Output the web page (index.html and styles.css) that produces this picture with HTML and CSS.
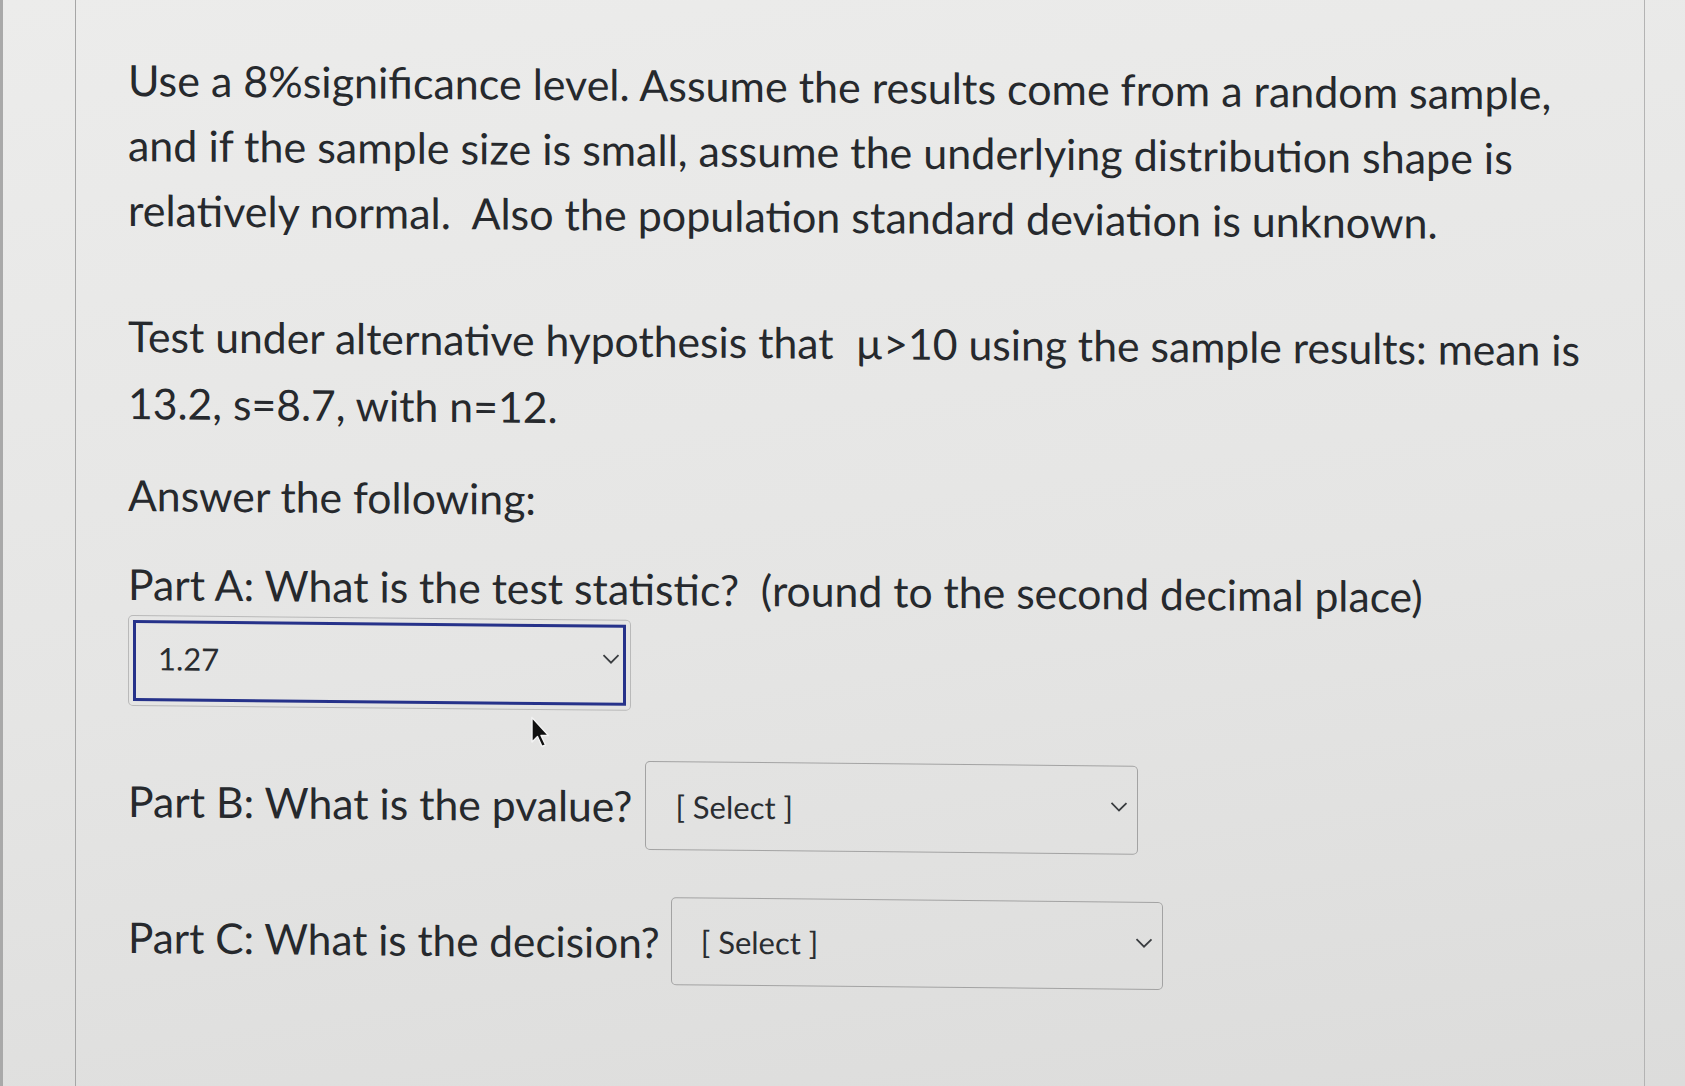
FILE: index.html
```html
<!DOCTYPE html>
<html lang="en">
<head>
    <meta charset="UTF-8">
    <meta name="viewport" content="width=device-width, initial-scale=1.0">
    <title>Quiz Question</title>
    <link rel="stylesheet" href="styles.css">
</head>
<body>
    <div class="page">
        <div class="question">
            <p class="intro">Use a 8%significance level. Assume the results come from a random sample,<br>
                and if the sample size is small, assume the underlying distribution shape is<br>
                relatively normal.&nbsp; Also the population standard deviation is unknown.</p>

            <p class="test">Test under alternative hypothesis that &nbsp;µ&gt;10 using the sample results: mean is<br>
                13.2, s=8.7, with n=12.</p>

            <p class="answer">Answer the following:</p>

            <p class="part-a">Part A: What is the test statistic?&nbsp; (round to the second decimal place)</p>
            <div class="select select-a focused">
                <span>1.27</span>
                <svg class="chevron" width="18" height="11" viewBox="0 0 18 11"><polyline points="1.5,1.5 9,9 16.5,1.5"/></svg>
            </div>

            <div class="row row-b">
                <span class="label">Part B: What is the pvalue?</span>
                <div class="select select-b">
                    <span>[ Select ]</span>
                    <svg class="chevron" width="18" height="11" viewBox="0 0 18 11"><polyline points="1.5,1.5 9,9 16.5,1.5"/></svg>
                </div>
            </div>

            <div class="row row-c">
                <span class="label">Part C: What is the decision?</span>
                <div class="select select-c">
                    <span>[ Select ]</span>
                    <svg class="chevron" width="18" height="11" viewBox="0 0 18 11"><polyline points="1.5,1.5 9,9 16.5,1.5"/></svg>
                </div>
            </div>
        </div>
    </div>

    <svg class="cursor" width="24" height="34" viewBox="0 0 24 34">
        <path d="M2,1.5 L2,26 L7.5,20.5 L12,30.5 L15.5,29 L11,19.5 L18.5,19.5 Z"/>
    </svg>
</body>
</html>
```

FILE: styles.css
```css
html, body {
    height: 100%;
}
body {
    margin: 0;
    font-family: Lato, "Open Sans", sans-serif;
    color: #26292d;
    background: linear-gradient(172deg, #ececeb 0%, #e5e5e4 55%, #dcdcdb 100%);
    border-left: 3px solid #a9a9a9;
    box-sizing: border-box;
    overflow: hidden;
    position: relative;
}
.page {
    margin-left: 72px;
    width: 1570px;
    height: 100%;
    box-sizing: border-box;
    border-left: 1px solid #a6a6a6;
    border-right: 1px solid #b3b3b3;
    padding: 47px 0 0 52px;
}
/* the photo is taken at a slight angle */
.question {
    transform: skewY(0.55deg);
    transform-origin: 0 0;
}
.question p {
    margin: 0;
    font-size: 42.7px;
    line-height: 67px;
    white-space: nowrap;
}
.question p.intro {
    font-size: 43px;
    line-height: 65px;
}
.question p.test {
    margin-top: 60px;
}
.question p.answer {
    margin-top: 25px;
}
.question p.part-a {
    margin-top: 22px;
}

.select {
    display: flex;
    align-items: center;
    justify-content: space-between;
    box-sizing: border-box;
    border: 1px solid #a3a3a3;
    border-radius: 5px;
    padding: 0 9px 0 29px;
    font-size: 31px;
    color: #2a2d31;
}
.select .chevron {
    margin-top: -6px;
}
.select .chevron polyline {
    fill: none;
    stroke: #3a3d40;
    stroke-width: 1.8;
}
.select-a {
    width: 503px;
    height: 91px;
    margin-top: -2px;
    border-color: #b9b9b9;
    padding-right: 10px;
    padding-bottom: 6px;
}
.select-a.focused {
    outline: 3.5px solid #26328a;
    outline-offset: -8px;
}
.select-b {
    width: 493px;
    height: 89px;
}
.select-c {
    width: 492px;
    height: 88px;
}

.row {
    display: flex;
    align-items: center;
}
.row .label {
    font-size: 42.7px;
    line-height: 67px;
    white-space: nowrap;
}
.row-b {
    margin-top: 50px;
    gap: 13px;
}
.row-c {
    margin-top: 47px;
    gap: 11px;
}
.row-c .label {
    font-size: 42.3px;
}

.cursor {
    position: absolute;
    left: 527px;
    top: 716px;
}
.cursor path {
    fill: #111;
    stroke: #f4f4f4;
    stroke-width: 1.4;
    stroke-linejoin: round;
}
```
